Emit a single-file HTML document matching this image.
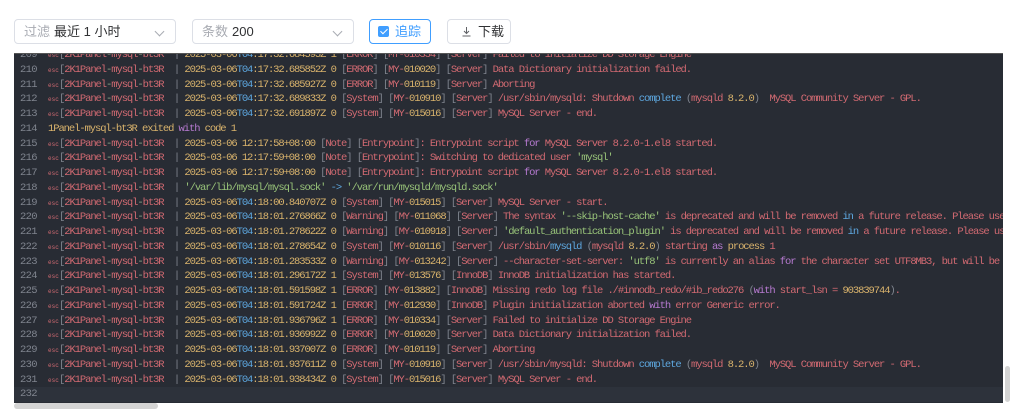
<!DOCTYPE html>
<html><head><meta charset="utf-8"><style>
body{margin:0;width:1023px;height:420px;background:#fff;position:relative;overflow:hidden;font-family:"Liberation Sans","Noto Sans CJK SC",sans-serif}
.sel{position:absolute;top:19px;height:25px;border:1px solid #dcdfe6;border-radius:4px;box-sizing:border-box;font-size:13px;line-height:23px;padding-left:9px;color:#303133}
.sel .p{color:#a8abb2;margin-right:4px}
.sel .ar{position:absolute;right:12px;top:8px;width:6px;height:6px;border-right:1px solid #a8abb2;border-bottom:1px solid #a8abb2;transform:rotate(45deg)}
.btn{position:absolute;top:19px;height:25px;border:1px solid #dcdfe6;border-radius:4px;box-sizing:border-box;font-size:13px;line-height:23px;color:#303133}
#ed{position:absolute;left:14px;top:53px;width:989px;height:349px;background:#282c34;overflow:hidden;border-top:1px solid #555}
#in{position:absolute;left:0;top:-6px;width:100%}
.l{height:14.75px;line-height:14.75px;position:relative;font-family:"Liberation Mono",monospace;font-size:10.5px;letter-spacing:-1.08px;white-space:pre;color:#d26a72}
.n{position:absolute;left:6px;color:#7f848e;letter-spacing:-0.7px}
.c{position:absolute;left:34px}
.e{font-size:6px;letter-spacing:0;display:inline-block;width:11px;color:#d26a72}
.g{color:#7f848e}.y{color:#d9b36c}.b{color:#5ea8e0}.h{color:#8fa88a}.p{color:#b77ad1}.s{color:#98c379}
.cur{background:#2d323b}
</style></head><body>
<div class="sel" style="left:14px;width:162px"><span class="p">过滤</span>最近 1 小时<span class="ar"></span></div>
<div class="sel" style="left:192px;width:162px"><span class="p">条数</span>200<span class="ar"></span></div>
<div class="btn" style="left:369px;width:62px;border-color:#409eff;color:#409eff;padding-left:8px"><span style="display:inline-block;width:11px;height:11px;background:#409eff;border-radius:2px;vertical-align:-1px;margin-right:6px;position:relative"><span style="position:absolute;left:3.5px;top:1px;width:3px;height:6px;border-right:1.3px solid #fff;border-bottom:1.3px solid #fff;transform:rotate(45deg)"></span></span>追踪</div>
<div class="btn" style="left:447px;width:64px;padding-left:13px"><svg width="11" height="11" viewBox="0 0 11 11" style="vertical-align:-1px;margin-right:6px"><path d="M5.5 1v6M3 5l2.5 2.5L8 5M1.5 10h8" stroke="#606266" stroke-width="1" fill="none"/></svg>下载</div>
<div id="ed"><div id="in">
<div class="l"><span class="n">209</span><span class="c"><span class="e">esc</span><span class="g">[</span>2K1Panel<span class="h">-</span>mysql<span class="h">-</span>bt3R  <span class="g">|</span> <span class="y">2025-03-06</span><span class="b">T04</span><span class="y">:17:32.684595Z 1</span> <span class="g">[</span>ERROR<span class="g">]</span> <span class="g">[</span>MY-010334<span class="g">]</span> <span class="g">[</span>Server<span class="g">]</span> Failed to initialize DD Storage Engine</span></div>
<div class="l"><span class="n">210</span><span class="c"><span class="e">esc</span><span class="g">[</span>2K1Panel<span class="h">-</span>mysql<span class="h">-</span>bt3R  <span class="g">|</span> <span class="y">2025-03-06</span><span class="b">T04</span><span class="y">:17:32.685852Z 0</span> <span class="g">[</span>ERROR<span class="g">]</span> <span class="g">[</span>MY-<span class="y">010020</span><span class="g">]</span> <span class="g">[</span>Server<span class="g">]</span> Data Dictionary initialization failed.</span></div>
<div class="l"><span class="n">211</span><span class="c"><span class="e">esc</span><span class="g">[</span>2K1Panel<span class="h">-</span>mysql<span class="h">-</span>bt3R  <span class="g">|</span> <span class="y">2025-03-06</span><span class="b">T04</span><span class="y">:17:32.685927Z 0</span> <span class="g">[</span>ERROR<span class="g">]</span> <span class="g">[</span>MY-<span class="y">010119</span><span class="g">]</span> <span class="g">[</span>Server<span class="g">]</span> Aborting</span></div>
<div class="l"><span class="n">212</span><span class="c"><span class="e">esc</span><span class="g">[</span>2K1Panel<span class="h">-</span>mysql<span class="h">-</span>bt3R  <span class="g">|</span> <span class="y">2025-03-06</span><span class="b">T04</span><span class="y">:17:32.689833Z 0</span> <span class="g">[</span>System<span class="g">]</span> <span class="g">[</span>MY-<span class="y">010910</span><span class="g">]</span> <span class="g">[</span>Server<span class="g">]</span> /usr/sbin/mysqld: Shutdown <span class="b">complete</span> <span class="g">(</span>mysqld <span class="y">8.2.0</span><span class="g">)</span>  MySQL Community Server - GPL.</span></div>
<div class="l"><span class="n">213</span><span class="c"><span class="e">esc</span><span class="g">[</span>2K1Panel<span class="h">-</span>mysql<span class="h">-</span>bt3R  <span class="g">|</span> <span class="y">2025-03-06</span><span class="b">T04</span><span class="y">:17:32.691897Z 0</span> <span class="g">[</span>System<span class="g">]</span> <span class="g">[</span>MY-<span class="y">015016</span><span class="g">]</span> <span class="g">[</span>Server<span class="g">]</span> MySQL Server - end.</span></div>
<div class="l"><span class="n">214</span><span class="c"><span class="y">1Panel-mysql-bt3R exited <span class="p">with</span> code 1</span></span></div>
<div class="l"><span class="n">215</span><span class="c"><span class="e">esc</span><span class="g">[</span>2K1Panel<span class="h">-</span>mysql<span class="h">-</span>bt3R  <span class="g">|</span> <span class="y">2025-03-06 12:17:58+08:00</span> <span class="g">[</span>Note<span class="g">]</span> <span class="g">[</span>Entrypoint<span class="g">]</span>: Entrypoint script <span class="p">for</span> MySQL Server 8.2.0-1.el8 started.</span></div>
<div class="l"><span class="n">216</span><span class="c"><span class="e">esc</span><span class="g">[</span>2K1Panel<span class="h">-</span>mysql<span class="h">-</span>bt3R  <span class="g">|</span> <span class="y">2025-03-06 12:17:59+08:00</span> <span class="g">[</span>Note<span class="g">]</span> <span class="g">[</span>Entrypoint<span class="g">]</span>: Switching to dedicated user <span class="s">'mysql'</span></span></div>
<div class="l"><span class="n">217</span><span class="c"><span class="e">esc</span><span class="g">[</span>2K1Panel<span class="h">-</span>mysql<span class="h">-</span>bt3R  <span class="g">|</span> <span class="y">2025-03-06 12:17:59+08:00</span> <span class="g">[</span>Note<span class="g">]</span> <span class="g">[</span>Entrypoint<span class="g">]</span>: Entrypoint script <span class="p">for</span> MySQL Server 8.2.0-1.el8 started.</span></div>
<div class="l"><span class="n">218</span><span class="c"><span class="e">esc</span><span class="g">[</span>2K1Panel<span class="h">-</span>mysql<span class="h">-</span>bt3R  <span class="g">|</span> <span class="s">'/var/lib/mysql/mysql.sock'</span> <span class="b">-&gt;</span> <span class="s">'/var/run/mysqld/mysqld.sock'</span></span></div>
<div class="l"><span class="n">219</span><span class="c"><span class="e">esc</span><span class="g">[</span>2K1Panel<span class="h">-</span>mysql<span class="h">-</span>bt3R  <span class="g">|</span> <span class="y">2025-03-06</span><span class="b">T04</span><span class="y">:18:00.840707Z 0</span> <span class="g">[</span>System<span class="g">]</span> <span class="g">[</span>MY-<span class="y">015015</span><span class="g">]</span> <span class="g">[</span>Server<span class="g">]</span> MySQL Server - start.</span></div>
<div class="l"><span class="n">220</span><span class="c"><span class="e">esc</span><span class="g">[</span>2K1Panel<span class="h">-</span>mysql<span class="h">-</span>bt3R  <span class="g">|</span> <span class="y">2025-03-06</span><span class="b">T04</span><span class="y">:18:01.276866Z 0</span> <span class="g">[</span>Warning<span class="g">]</span> <span class="g">[</span>MY-<span class="y">011068</span><span class="g">]</span> <span class="g">[</span>Server<span class="g">]</span> The syntax <span class="s">'--skip-host-cache'</span> is deprecated and will be removed <span class="b">in</span> a future release. Please use SET GLOBAL</span></div>
<div class="l"><span class="n">221</span><span class="c"><span class="e">esc</span><span class="g">[</span>2K1Panel<span class="h">-</span>mysql<span class="h">-</span>bt3R  <span class="g">|</span> <span class="y">2025-03-06</span><span class="b">T04</span><span class="y">:18:01.278622Z 0</span> <span class="g">[</span>Warning<span class="g">]</span> <span class="g">[</span>MY-<span class="y">010918</span><span class="g">]</span> <span class="g">[</span>Server<span class="g">]</span> <span class="s">'default_authentication_plugin'</span> is deprecated and will be removed <span class="b">in</span> a future release. Please use</span></div>
<div class="l"><span class="n">222</span><span class="c"><span class="e">esc</span><span class="g">[</span>2K1Panel<span class="h">-</span>mysql<span class="h">-</span>bt3R  <span class="g">|</span> <span class="y">2025-03-06</span><span class="b">T04</span><span class="y">:18:01.278654Z 0</span> <span class="g">[</span>System<span class="g">]</span> <span class="g">[</span>MY-<span class="y">010116</span><span class="g">]</span> <span class="g">[</span>Server<span class="g">]</span> /usr/sbin/<span class="b">mysqld</span> <span class="g">(</span>mysqld <span class="y">8.2.0</span><span class="g">)</span> starting <span class="p">as</span> <span class="y">process</span> 1</span></div>
<div class="l"><span class="n">223</span><span class="c"><span class="e">esc</span><span class="g">[</span>2K1Panel<span class="h">-</span>mysql<span class="h">-</span>bt3R  <span class="g">|</span> <span class="y">2025-03-06</span><span class="b">T04</span><span class="y">:18:01.283533Z 0</span> <span class="g">[</span>Warning<span class="g">]</span> <span class="g">[</span>MY-<span class="y">013242</span><span class="g">]</span> <span class="g">[</span>Server<span class="g">]</span> --character-set-server: <span class="s">'utf8'</span> is currently an alias <span class="p">for</span> the character set UTF8MB3, but will be a</span></div>
<div class="l"><span class="n">224</span><span class="c"><span class="e">esc</span><span class="g">[</span>2K1Panel<span class="h">-</span>mysql<span class="h">-</span>bt3R  <span class="g">|</span> <span class="y">2025-03-06</span><span class="b">T04</span><span class="y">:18:01.296172Z 1</span> <span class="g">[</span>System<span class="g">]</span> <span class="g">[</span>MY-<span class="y">013576</span><span class="g">]</span> <span class="g">[</span>InnoDB<span class="g">]</span> InnoDB initialization has started.</span></div>
<div class="l"><span class="n">225</span><span class="c"><span class="e">esc</span><span class="g">[</span>2K1Panel<span class="h">-</span>mysql<span class="h">-</span>bt3R  <span class="g">|</span> <span class="y">2025-03-06</span><span class="b">T04</span><span class="y">:18:01.591598Z 1</span> <span class="g">[</span>ERROR<span class="g">]</span> <span class="g">[</span>MY-<span class="y">013882</span><span class="g">]</span> <span class="g">[</span>InnoDB<span class="g">]</span> Missing redo log file ./#innodb_redo/#ib_redo276 <span class="g">(</span><span class="p">with</span> start_lsn = <span class="y">903839744</span><span class="g">)</span>.</span></div>
<div class="l"><span class="n">226</span><span class="c"><span class="e">esc</span><span class="g">[</span>2K1Panel<span class="h">-</span>mysql<span class="h">-</span>bt3R  <span class="g">|</span> <span class="y">2025-03-06</span><span class="b">T04</span><span class="y">:18:01.591724Z 1</span> <span class="g">[</span>ERROR<span class="g">]</span> <span class="g">[</span>MY-<span class="y">012930</span><span class="g">]</span> <span class="g">[</span>InnoDB<span class="g">]</span> Plugin initialization aborted <span class="p">with</span> error Generic error.</span></div>
<div class="l"><span class="n">227</span><span class="c"><span class="e">esc</span><span class="g">[</span>2K1Panel<span class="h">-</span>mysql<span class="h">-</span>bt3R  <span class="g">|</span> <span class="y">2025-03-06</span><span class="b">T04</span><span class="y">:18:01.936796Z 1</span> <span class="g">[</span>ERROR<span class="g">]</span> <span class="g">[</span>MY-<span class="y">010334</span><span class="g">]</span> <span class="g">[</span>Server<span class="g">]</span> Failed to initialize DD Storage Engine</span></div>
<div class="l"><span class="n">228</span><span class="c"><span class="e">esc</span><span class="g">[</span>2K1Panel<span class="h">-</span>mysql<span class="h">-</span>bt3R  <span class="g">|</span> <span class="y">2025-03-06</span><span class="b">T04</span><span class="y">:18:01.936992Z 0</span> <span class="g">[</span>ERROR<span class="g">]</span> <span class="g">[</span>MY-<span class="y">010020</span><span class="g">]</span> <span class="g">[</span>Server<span class="g">]</span> Data Dictionary initialization failed.</span></div>
<div class="l"><span class="n">229</span><span class="c"><span class="e">esc</span><span class="g">[</span>2K1Panel<span class="h">-</span>mysql<span class="h">-</span>bt3R  <span class="g">|</span> <span class="y">2025-03-06</span><span class="b">T04</span><span class="y">:18:01.937007Z 0</span> <span class="g">[</span>ERROR<span class="g">]</span> <span class="g">[</span>MY-<span class="y">010119</span><span class="g">]</span> <span class="g">[</span>Server<span class="g">]</span> Aborting</span></div>
<div class="l"><span class="n">230</span><span class="c"><span class="e">esc</span><span class="g">[</span>2K1Panel<span class="h">-</span>mysql<span class="h">-</span>bt3R  <span class="g">|</span> <span class="y">2025-03-06</span><span class="b">T04</span><span class="y">:18:01.937611Z 0</span> <span class="g">[</span>System<span class="g">]</span> <span class="g">[</span>MY-<span class="y">010910</span><span class="g">]</span> <span class="g">[</span>Server<span class="g">]</span> /usr/sbin/mysqld: Shutdown <span class="b">complete</span> <span class="g">(</span>mysqld <span class="y">8.2.0</span><span class="g">)</span>  MySQL Community Server - GPL.</span></div>
<div class="l"><span class="n">231</span><span class="c"><span class="e">esc</span><span class="g">[</span>2K1Panel<span class="h">-</span>mysql<span class="h">-</span>bt3R  <span class="g">|</span> <span class="y">2025-03-06</span><span class="b">T04</span><span class="y">:18:01.938434Z 0</span> <span class="g">[</span>System<span class="g">]</span> <span class="g">[</span>MY-<span class="y">015016</span><span class="g">]</span> <span class="g">[</span>Server<span class="g">]</span> MySQL Server - end.</span></div>
<div class="l cur"><span class="n">232</span></div>
</div></div>
<div style="position:absolute;left:14px;top:403px;width:144px;height:6px;background:#d4d4d4;border-radius:3px"></div>
<div style="position:absolute;left:1005px;top:366px;width:5px;height:36px;background:#d4d4d4;border-radius:3px"></div>
</body></html>
